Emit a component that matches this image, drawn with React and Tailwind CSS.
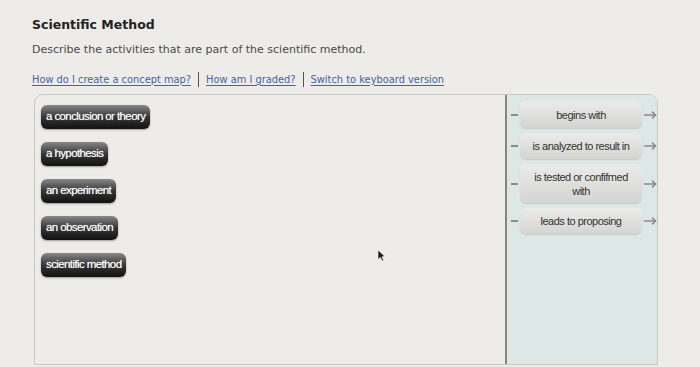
import React from 'react';

const CHIPS = ['a conclusion or theory', 'a hypothesis', 'an experiment', 'an observation', 'scientific method'];

// linking phrases in the right-hand panel, with their box heights
const PHRASES = [
    { text: 'begins with', h: 'h-[27px]' },
    { text: 'is analyzed to result in', h: 'h-[26px]' },
    { text: 'is tested or confifmed with', h: 'h-[39px]' },
    { text: 'leads to proposing', h: 'h-[26px]' },
];

const ArrowRight = () => (
    <svg width="14" height="8" viewBox="0 0 14 8" fill="none" stroke="#8a8a8a" strokeWidth="1.6" strokeLinecap="round" strokeLinejoin="round">
        <line x1="1.5" y1="4" x2="12.5" y2="4" />
        <polyline points="9.5,1.2 12.5,4 9.5,6.8" />
    </svg>
);

const Cursor = () => (
    <svg width="9" height="13" viewBox="0 0 9 13" className="absolute left-[377px] top-[249px]">
        <path d="M1 1 L1 10.5 L3.4 8.4 L5.1 12 L6.6 11.3 L5 7.8 L8 7.6 Z" fill="#1c1c1c" stroke="#fff" strokeWidth="0.6" />
    </svg>
);

const App = () => {
    return (
        <div className="relative w-[700px] h-[367px] overflow-hidden bg-[#edece8] font-['DejaVu_Sans',sans-serif]">
            <div className="pl-[32px] pt-[16px]">
                <h1 className="text-[12.5px] leading-[18px] font-bold text-[#232323]">Scientific Method</h1>
                <p className="mt-[9px] text-[11px] leading-[14px] text-[#4a4a4a]">Describe the activities that are part of the scientific method.</p>
                <div className="mt-[15px] flex items-center text-[9.85px] leading-[14px] text-[#4862a3]">
                    <a className="underline underline-offset-2">How do I create a concept map?</a>
                    <span className="mx-[7px] w-[1px] h-[15px] bg-[#555]"></span>
                    <a className="underline underline-offset-2">How am I graded?</a>
                    <span className="mx-[7px] w-[1px] h-[15px] bg-[#555]"></span>
                    <a className="underline underline-offset-2">Switch to keyboard version</a>
                </div>
            </div>

            <div className="ml-[34px] mt-[7px] w-[624px] h-[271px] flex border border-[#c9c9c4] rounded-t-[9px] overflow-hidden">
                <div className="flex-1 flex flex-col items-start gap-[13px] pt-[10px] pl-[6px]">
                    {CHIPS.map(label => (
                        <div key={label} className="h-[24px] flex items-center px-[5px] rounded-[6px] bg-gradient-to-b from-[#8a8a8a] via-[#363636] to-[#121212] shadow-[0_1px_2px_rgba(0,0,0,0.35)] font-['Liberation_Sans',sans-serif] text-[11.5px] tracking-[-0.6px] text-white [text-shadow:0_0_1px_rgba(255,255,255,0.6)]">
                            {label}
                        </div>
                    ))}
                </div>
                <div className="w-[152px] bg-[#dde8e6] border-l-2 border-[#858585] flex flex-col gap-[5px] pt-[6px] pl-[4px]">
                    {PHRASES.map(p => (
                        <div key={p.text} className="flex items-center">
                            <span className="w-[7px] h-[2px] bg-[#8c8c8c]"></span>
                            <div className={`${p.h} w-[122px] ml-[2px] flex items-center justify-center text-center px-[8px] rounded-[6px] bg-gradient-to-b from-[#ebebe9] to-[#d4d4d1] shadow-[0_1px_1px_rgba(0,0,0,0.12)] font-['Liberation_Sans',sans-serif] text-[11px] leading-[14px] tracking-[-0.5px] text-[#333]`}>
                                {p.text}
                            </div>
                            <span className="ml-[1px]"><ArrowRight /></span>
                        </div>
                    ))}
                </div>
            </div>

            <Cursor />
        </div>
    );
};

export default App;
